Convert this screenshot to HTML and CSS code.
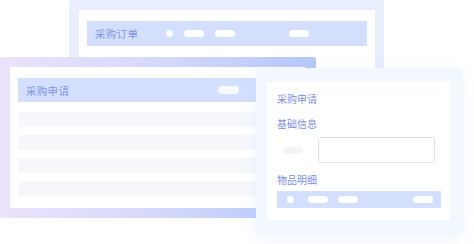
FILE: index.html
```html
<!DOCTYPE html>
<html lang="zh-CN">
<head>
    <meta charset="UTF-8">
    <title>采购</title>
    <link rel="stylesheet" href="styles.css">
</head>
<body>
    <div class="stage">

        <!-- 后面的窗口: 采购订单 -->
        <div class="win winOrder">
            <div class="winInner">
                <div class="bar">
                    <span class="barTitle">采购订单</span>
                    <span class="dot"></span>
                    <span class="pill"></span>
                    <span class="pill"></span>
                    <span class="pill pillFar"></span>
                </div>
            </div>
        </div>

        <!-- 前面的窗口: 采购申请列表 -->
        <div class="win winApply">
            <div class="winInner">
                <div class="bar barApply">
                    <span class="barTitle">采购申请</span>
                    <span class="pill pillWhite"></span>
                </div>
                <div class="rows">
                    <div class="row"></div>
                    <div class="row"></div>
                    <div class="row"></div>
                    <div class="row"></div>
                </div>
            </div>
        </div>

        <!-- 右边的表单卡片 -->
        <div class="card">
            <div class="cardInner">
                <div class="label">采购申请</div>
                <div class="label section">基础信息</div>
                <div class="field">
                    <span class="fieldName"></span>
                    <span class="fieldInput"></span>
                </div>
                <div class="label">物品明细</div>
                <div class="bar barItems">
                    <span class="dot"></span>
                    <span class="pill"></span>
                    <span class="pill"></span>
                    <span class="pill pillFar"></span>
                </div>
            </div>
        </div>

    </div>
</body>
</html>
```

FILE: styles.css
```css
body {
    margin: 0;
    background: #ffffff;
    font-family: "Noto Sans CJK SC", "Noto Sans", sans-serif;
}

.stage {
    position: relative;
    width: 474px;
    height: 244px;
    overflow: hidden;
}

.win {
    position: absolute;
    box-sizing: border-box;
}

.winInner {
    background: #ffffff;
    height: 100%;
    box-sizing: border-box;
}

/* back window */
.winOrder {
    left: 69px;
    top: 0;
    width: 315px;
    height: 80px;
    background: #e9eefd;
    padding: 10px 9px 0 10px;
    border-radius: 2px;
}

.winOrder .winInner {
    padding: 11px 8px 0 8px;
}

.bar {
    display: flex;
    align-items: center;
    background: #d4dffd;
}

.winOrder .bar {
    height: 25px;
    padding-left: 8px;
}

.barTitle {
    color: #7d95e6;
    font-size: 10.5px;
    letter-spacing: 0.3px;
}

.dot {
    width: 7px;
    height: 7px;
    border-radius: 50%;
    background: #ffffff;
}

.pill {
    width: 20px;
    height: 7px;
    border-radius: 4px;
    background: #ffffff;
}

.winOrder .dot {
    margin-left: 28px;
}

.winOrder .pill {
    margin-left: 11px;
}

.winOrder .pillFar {
    margin-left: 54px;
}

/* front window */
.winApply {
    left: 0;
    top: 57px;
    width: 316px;
    height: 161px;
    background: linear-gradient(90deg, #ece2fb 0%, #d5d8fb 50%, #b5c7fa 100%);
    padding: 10px 0 10px 10px;
    border-radius: 2px;
}

.winApply .winInner {
    padding: 11px 0 0 8px;
    width: 295px;
}

.barApply {
    height: 24px;
    padding-left: 8px;
    padding-right: 66px;
}

.pillWhite {
    width: 21px;
    height: 8px;
    margin-left: auto;
    background: #f7f9ff;
}

.rows {
    display: flex;
    flex-direction: column;
    gap: 8px;
    margin-top: 10px;
}

.row {
    height: 15px;
    background: #f7f8fc;
}

/* right card */
.card {
    position: absolute;
    left: 256px;
    top: 68px;
    width: 206px;
    height: 166px;
    box-sizing: border-box;
    padding: 14px 12px 14px 11px;
    background: #f3f8ff;
    border-radius: 4px;
    box-shadow: 0 4px 16px rgba(170, 195, 240, 0.22);
}

.cardInner {
    background: #ffffff;
    height: 100%;
    box-sizing: border-box;
    padding: 10px 9px 0 10px;
    display: flex;
    flex-direction: column;
}

.label {
    color: #7a8fe0;
    font-size: 10px;
    line-height: 14px;
}

.section {
    margin-top: 11px;
}

.field {
    display: flex;
    align-items: center;
    margin-top: 6px;
    margin-bottom: 10px;
}

.fieldName {
    width: 20px;
    height: 7px;
    border-radius: 4px;
    background: #f3f4f8;
    margin-left: 6px;
}

.fieldInput {
    width: 115px;
    height: 24px;
    margin-left: 15px;
    border: 1px solid #dde3f6;
    border-radius: 2px;
    background: #ffffff;
}

.barItems {
    height: 17px;
    margin-top: 4px;
    padding-left: 10px;
}

.barItems .pill {
    margin-left: 10px;
}

.barItems .dot {
    margin-right: 4px;
}

.barItems .pillFar {
    margin-left: 55px;
}
```
